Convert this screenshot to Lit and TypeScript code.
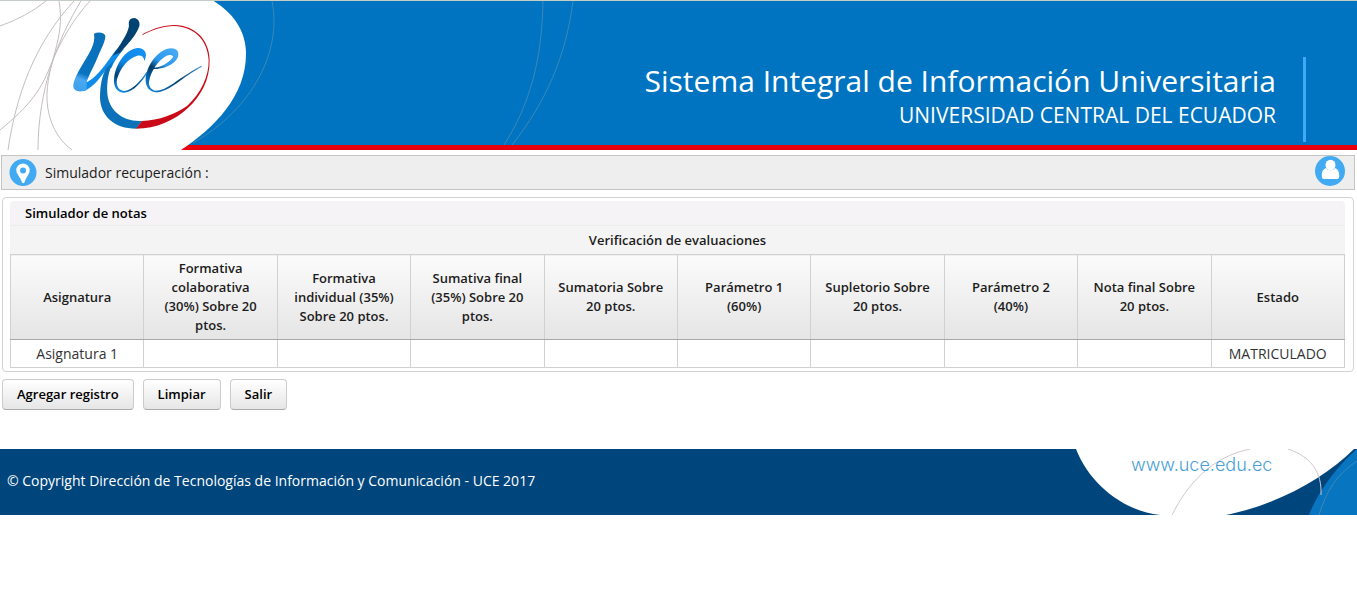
import { LitElement, html, css, svg } from "lit";
import { customElement, property, state } from "lit/decorators.js";

const COLUMNS = [
  "Asignatura",
  "Formativa colaborativa (30%) Sobre 20 ptos.",
  "Formativa individual (35%) Sobre 20 ptos.",
  "Sumativa final (35%) Sobre 20 ptos.",
  "Sumatoria Sobre 20 ptos.",
  "Parámetro 1 (60%)",
  "Supletorio Sobre 20 ptos.",
  "Parámetro 2 (40%)",
  "Nota final Sobre 20 ptos.",
  "Estado",
];

const emptyRow = (n: number) => [`Asignatura ${n}`, "", "", "", "", "", "", "", "", "MATRICULADO"];

// University emblem, drawn on a 900 x 450 grid
const emblem = svg`
  <defs>
    <linearGradient id="stroke-u" gradientUnits="userSpaceOnUse" x1="300" y1="100" x2="235" y2="275">
      <stop offset="0" stop-color="#0a70b8"/>
      <stop offset=".7" stop-color="#0873c0"/>
      <stop offset=".8" stop-color="#4aa8f0"/>
      <stop offset="1" stop-color="#3aa0ee"/>
    </linearGradient>
    <linearGradient id="stroke-c" gradientUnits="userSpaceOnUse" x1="430" y1="150" x2="350" y2="270">
      <stop offset="0" stop-color="#1292f5"/>
      <stop offset=".45" stop-color="#0c84e0"/>
      <stop offset=".75" stop-color="#00406e"/>
      <stop offset="1" stop-color="#1292f5"/>
    </linearGradient>
    <linearGradient id="stroke-e" gradientUnits="userSpaceOnUse" x1="530" y1="150" x2="445" y2="265">
      <stop offset="0" stop-color="#4aaaf5"/>
      <stop offset=".4" stop-color="#2a98ee"/>
      <stop offset=".6" stop-color="#003c68"/>
      <stop offset="1" stop-color="#1184dd"/>
    </linearGradient>
    <linearGradient id="stroke-tail" gradientUnits="userSpaceOnUse" x1="450" y1="270" x2="605" y2="198">
      <stop offset="0" stop-color="#1184dd"/>
      <stop offset=".5" stop-color="#00406e"/>
      <stop offset="1" stop-color="#4a9bd0"/>
    </linearGradient>
  </defs>
  <path fill="#0f8be8" d="M250 273L258 246C270 246 300 216 320 188C332 172 342 156 352 146L372 146C356 166 342 182 334 204L318 209C296 240 274 266 250 273Z"/>
  <path fill="url(#stroke-u)" d="M282 101C294 95 312 97 316 107C318 120 303 148 291 176C279 205 261 236 260 248L260 270C240 279 218 274 220 255C222 236 240 206 255 181C270 156 287 130 282 101Z"/>
  <path fill="#004272" d="M338 168C360 134 382 105 387 78C385 62 389 55 402 54C415 56 421 66 418 79C408 108 382 134 360 158C352 160 344 164 338 168Z"/>
  <path fill="#0b72ba" d="M318 205L340 185C325 215 320 245 322 280C326 330 366 366 426 363L409 386C342 386 302 348 300 294C300 255 306 230 318 205Z"/>
  <path fill="#cb0a18" d="M408 386L426 363C476 361 528 342 562 317C603 278 627 230 626 180C622 114 578 80 522 78C490 79 460 88 428 105L427 103C460 85 490 76 524 75C586 76 628 120 629 180C630 240 602 289 563 325C522 362 470 386 408 386Z"/>
  <path fill="url(#stroke-c)" d="M433 183C432 170 424 165 412 167C386 174 361 202 351 238C347 260 358 273 374 273C398 271 424 240 440 216L443 218C426 244 400 276 373 278C352 278 341 262 342 240C344 196 376 148 412 144C434 143 445 160 433 183Z"/>
  <path fill="url(#stroke-e)" d="M458 203C478 204 506 190 520 170C516 164 508 164 500 167C474 180 452 214 447 246C446 262 456 271 470 273L470 277C448 277 436 260 437 238C439 196 476 146 514 145C532 146 538 156 534 170C524 196 486 208 458 207Z"/>
  <path fill="url(#stroke-tail)" d="M466 272C504 272 530 236 604 197L606 200C544 232 510 276 466 277Z"/>`;

const styles = css`
  :host {
    display: block;
    font: 14px/19px "Segoe UI", "Open Sans", "Noto Sans", sans-serif;
    color: #1c1c1c;
  }
`;

@customElement("site-banner")
class SiteBanner extends LitElement {
  static styles = [
    styles,
    css`
      .banner {
        display: flex;
        justify-content: space-between;
        align-items: flex-start;
        overflow: hidden;
        border-top: 1px solid #c6cdc6;
        background: linear-gradient(#0074c0 144px, #e8000c 144px);
      }
      .art {
        display: block;
        flex: 0 1 600px;
        min-width: 260px;
        height: 149px;
      }
      .titles {
        margin: 56px 51px 0 0;
        padding: 4px 27px 0 0;
        height: 81px;
        border-right: 3px solid #3fa9f5;
        color: #fff;
        text-align: right;
        white-space: nowrap;
      }
      h1,
      p {
        margin: 0;
        font-weight: 400;
      }
      h1 {
        font-size: 30px;
        line-height: 40px;
      }
      p {
        font-size: 21px;
        line-height: 29px;
      }
    `,
  ];

  render() {
    return html`<header class="banner">
      <svg class="art" viewBox="0 1 600 149" preserveAspectRatio="xMinYMin slice" role="img" aria-label="UCE">
        <path fill="#fff" d="M0 0H212C236 14 246 34 246 54C246 96 214 128 181 150H0Z" />
        <g fill="none" stroke="#c4bec4" stroke-width="1">
          <path d="M0 26Q26 17 46 1" />
          <path d="M0 130C32 104 42 88 52 62C60 42 74 18 90 1" />
          <path d="M8 150C16 96 34 44 74 1" />
          <path d="M38 150C38 90 58 38 81 1" />
          <path d="M59 1C66 40 46 62 47 100C48 122 58 140 72 150" />
        </g>
        <g fill="none" stroke="#3d88b8" stroke-width="1">
          <path d="M272 1C282 50 254 108 193 143" />
          <path d="M543 1C542 60 530 104 504 145" />
          <path d="M573 1C566 56 546 102 512 145" />
        </g>
        <g transform="scale(.3333)">${emblem}</g>
      </svg>
      <div class="titles">
        <h1>Sistema Integral de Información Universitaria</h1>
        <p>UNIVERSIDAD CENTRAL DEL ECUADOR</p>
      </div>
    </header>`;
  }
}

@customElement("location-bar")
class LocationBar extends LitElement {
  @property() label = "";

  static styles = [
    styles,
    css`
      .bar {
        display: flex;
        align-items: center;
        gap: 8px;
        box-sizing: border-box;
        height: 35px;
        margin: 5px 2px 0 1px;
        padding: 0 9px 0 7px;
        border: 1px solid #c4c4c4;
        background: #eeeeee;
      }
      .label {
        flex: 1;
      }
      .user {
        display: block;
        padding: 0 0 4px;
        border: 0;
        background: none;
      }
      svg {
        display: block;
      }
    `,
  ];

  render() {
    return html`<div class="bar">
      <svg width="28" height="28" viewBox="0 0 28 28" aria-hidden="true">
        <circle cx="14" cy="13.5" r="13.5" fill="#42aaf2" />
        <path fill="#fff" fill-rule="evenodd" d="M14 4.500A6.700 6.700 0 0 1 20.700 11.200C20.700 15 17 18 15.500 23.500Q14.200 25 13 23.500C11.500 18 7.300 15 7.300 11.200A6.700 6.700 0 0 1 14 4.500ZM14 8.600A3 3 0 1 0 14 14.600A3 3 0 1 0 14 8.600Z" />
      </svg>
      <span class="label">${this.label}</span>
      <button class="user" aria-label="Usuario">
        <svg width="30" height="30" viewBox="0 0 30 30" aria-hidden="true">
          <circle cx="15" cy="15" r="15" fill="#42aaf2" />
          <ellipse cx="15.500" cy="9" rx="5" ry="5.200" fill="#fff" />
          <path fill="#fff" d="M11 12C13 15 18 15 20 12C23 13 24.500 16 24.200 21Q24.100 23 22 23H9Q6.900 23 6.900 21C6.500 16 8 13 11 12Z" />
        </svg>
      </button>
    </div>`;
  }
}

@customElement("grades-panel")
class GradesPanel extends LitElement {
  @property({ attribute: false }) rows: string[][] = [];

  static styles = [
    styles,
    css`
      .panel {
        margin: 7px 3px 0 2px;
        padding: 3px 8px 3px 7px;
        border: 1px solid #d2d2d2;
        border-radius: 4px;
      }
      h2 {
        margin: 0;
        padding: 3px 15px 2px;
        border-radius: 4px 4px 0 0;
        background: #f5f3f5;
        color: #000;
        font-size: 13px;
        font-weight: 600;
        line-height: 19px;
      }
      table {
        width: 100%;
        border-collapse: collapse;
        table-layout: fixed;
      }
      caption {
        padding: 5px 0 4px;
        border-top: 1px solid #ececec;
        background: #f4f4f4;
        font-size: 13px;
        font-weight: 600;
      }
      th,
      td {
        padding: 4px 12px;
        border: 1px solid #cfd3cf;
        text-align: center;
      }
      th {
        background: linear-gradient(#fbfbfb, #e5e5e5);
        border-bottom-color: #a8a8a8;
        font-size: 13px;
        font-weight: 600;
      }
      td {
        height: 19px;
        color: #333;
        white-space: nowrap;
      }
    `,
  ];

  render() {
    return html`<section class="panel">
      <h2>Simulador de notas</h2>
      <table>
        <caption>Verificación de evaluaciones</caption>
        <thead>
          <tr>${COLUMNS.map((c) => html`<th scope="col">${c}</th>`)}</tr>
        </thead>
        <tbody>
          ${this.rows.map((r) => html`<tr>${r.map((v) => html`<td>${v}</td>`)}</tr>`)}
        </tbody>
      </table>
    </section>`;
  }
}

@customElement("site-footer")
class SiteFooter extends LitElement {
  static styles = [
    styles,
    css`
      footer {
        display: flex;
        justify-content: space-between;
        align-items: flex-start;
        height: 66px;
        margin-top: 39px;
        padding-left: 7px;
        overflow: hidden;
        background: #00457c;
        color: #fff;
      }
      .copyright {
        padding-top: 22px;
      }
      .art {
        flex: none;
        display: block;
      }
      .site {
        fill: #4a9fd8;
        font: 300 18px "Inter", "Open Sans", sans-serif;
      }
    `,
  ];

  render() {
    return html`<footer>
      <span class="copyright">© Copyright Dirección de Tecnologías de Información y Comunicación - UCE 2017</span>
      <svg class="art" width="287" height="66" viewBox="0 0 287 66">
        <path fill="#0875c0" d="M287 0C268 16 248 42 239 66H287Z" />
        <path fill="#fff" d="M6 0C20 36 54 62 90 66H156C206 56 254 30 284 0Z" />
        <g fill="none" stroke="#cfc8cf">
          <path d="M102 66C118 34 142 8 180 0" />
          <path d="M218 0C242 8 252 24 251 46" />
        </g>
        <path fill="none" stroke="#3d88b8" d="M287 12C268 24 256 42 249 66" />
        <a href="#"><text class="site" x="61" y="22">www.uce.edu.ec</text></a>
      </svg>
    </footer>`;
  }
}

@customElement("app-root")
class AppRoot extends LitElement {
  @state() private rows = [emptyRow(1)];

  static styles = [
    styles,
    css`
      .actions {
        display: flex;
        gap: 9px;
        margin: 7px 2px 0;
      }
      .action {
        padding: 5px 14px;
        border: 1px solid #ccc;
        border-bottom-color: #aaa;
        border-radius: 4px;
        background: linear-gradient(#fff, #e6e6e6);
        color: #000;
        font: inherit;
        font-size: 13px;
        font-weight: 600;
      }
    `,
  ];

  private addRow() {
    this.rows = [...this.rows, emptyRow(this.rows.length + 1)];
  }

  private clear() {
    this.rows = [emptyRow(1)];
  }

  render() {
    return html`
      <site-banner></site-banner>
      <location-bar label="Simulador recuperación :"></location-bar>
      <main>
        <grades-panel .rows=${this.rows}></grades-panel>
        <div class="actions">
          <button class="action" @click=${this.addRow}>Agregar registro</button>
          <button class="action" @click=${this.clear}>Limpiar</button>
          <button class="action">Salir</button>
        </div>
      </main>
      <site-footer></site-footer>
    `;
  }
}
